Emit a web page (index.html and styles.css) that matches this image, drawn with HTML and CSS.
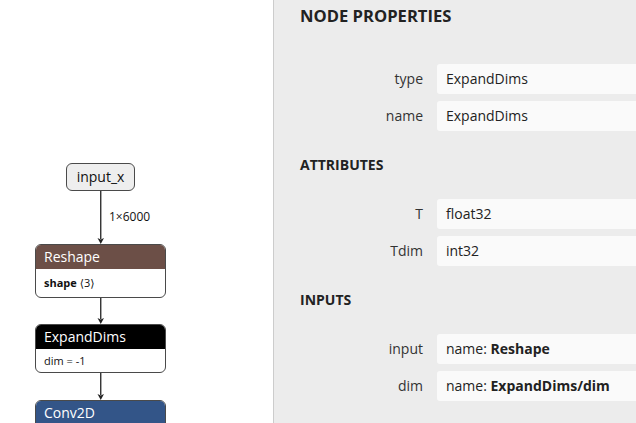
FILE: index.html
```html
<!DOCTYPE html>
<html>
<head>
<meta charset="utf-8">
<link rel="stylesheet" href="styles.css">
</head>
<body>
<div class="app">
  <div class="graph">
    <svg class="edges" width="273" height="423" viewBox="0 0 273 423">
      <g stroke="#222" stroke-width="1.3" fill="none">
        <line x1="100.75" y1="191" x2="100.75" y2="239"/>
        <line x1="100.75" y1="298" x2="100.75" y2="319"/>
        <line x1="100.75" y1="373" x2="100.75" y2="395"/>
      </g>
      <g fill="#222">
        <path d="M97.5 238 L100.75 244 L104 238 L100.75 239.5 Z"/>
        <path d="M97.5 318 L100.75 324 L104 318 L100.75 319.5 Z"/>
        <path d="M97.5 394 L100.75 400 L104 394 L100.75 395.5 Z"/>
      </g>
    </svg>
    <div class="edge-label">1×6000</div>
    <div class="node node-input">input_x</div>
    <div class="node node-op node-reshape">
      <div class="node-head head-shape">Reshape</div>
      <div class="node-body"><b>shape</b> ⟨3⟩</div>
    </div>
    <div class="node node-op node-expand">
      <div class="node-head head-default">ExpandDims</div>
      <div class="node-body">dim = -1</div>
    </div>
    <div class="node node-op node-conv">
      <div class="node-head head-layer">Conv2D</div>
    </div>
  </div>
  <div class="panel">
    <div class="title">NODE PROPERTIES</div>
    <div class="rows first">
      <div class="label">type</div><div class="value">ExpandDims</div>
      <div class="label">name</div><div class="value">ExpandDims</div>
    </div>
    <div class="section">ATTRIBUTES</div>
    <div class="rows">
      <div class="label">T</div><div class="value">float32</div>
      <div class="label">Tdim</div><div class="value">int32</div>
    </div>
    <div class="section">INPUTS</div>
    <div class="rows">
      <div class="label">input</div><div class="value">name: <b>Reshape</b></div>
      <div class="label">dim</div><div class="value">name: <b>ExpandDims/dim</b></div>
    </div>
  </div>
</div>
</body>
</html>
```

FILE: styles.css
```css
html, body {
  margin: 0;
  padding: 0;
  width: 636px;
  height: 423px;
  overflow: hidden;
  font-family: "Open Sans", "DejaVu Sans", sans-serif;
}

.app {
  display: flex;
  width: 636px;
  height: 423px;
}

.graph {
  position: relative;
  width: 273px;
  flex: none;
  background: #ffffff;
  overflow: hidden;
}

.edges {
  position: absolute;
  left: 0;
  top: 0;
}

.edge-label {
  position: absolute;
  left: 109px;
  top: 209px;
  font-size: 12px;
  line-height: 16px;
  color: #111;
}

.node {
  position: absolute;
  box-sizing: border-box;
  border: 1px solid #4a4a4a;
  border-radius: 6px;
  overflow: hidden;
}

.node-input {
  left: 66px;
  top: 163px;
  width: 69px;
  height: 28px;
  background: #eeeeee;
  color: #111;
  font-size: 14px;
  line-height: 26px;
  text-align: center;
}

.node-op {
  left: 35px;
  width: 131px;
  background: #ffffff;
}

.node-reshape { top: 244px; height: 54px; }
.node-expand { top: 324px; height: 49px; }
.node-conv { top: 400px; height: 60px; }

.node-head {
  height: 24px;
  line-height: 24px;
  padding-left: 8px;
  font-size: 14px;
  color: #ffffff;
}

.head-shape { background: #6c4f47; }
.head-default { background: #000000; }
.head-layer { background: #335588; }

.node-body {
  padding-left: 8px;
  font-size: 11px;
  line-height: 28px;
  color: #111;
}

.node-expand .node-body { line-height: 23px; }

.panel {
  flex: 1;
  min-width: 0;
  background: #ececec;
  border-left: 1px solid #cccccc;
  padding-left: 26px;
  overflow: hidden;
}

.title {
  margin-top: 5px;
  font-size: 16.6px;
  line-height: 22px;
  font-weight: 700;
  color: #222;
}

.section {
  margin-top: 24px;
  font-size: 14px;
  line-height: 20px;
  font-weight: 700;
  color: #222;
}

.rows {
  display: grid;
  grid-template-columns: 123px 1fr;
  column-gap: 14px;
  row-gap: 7px;
  margin-top: 24px;
  margin-right: -40px;
}

.rows.first { margin-top: 37px; }

.label {
  text-align: right;
  font-size: 14px;
  line-height: 30px;
  color: #333;
}

.value {
  height: 30px;
  line-height: 30px;
  padding-left: 9px;
  background: #fafafa;
  border-radius: 3px;
  font-size: 14px;
  color: #222;
  white-space: nowrap;
}

.value b { font-weight: 700; }
```
